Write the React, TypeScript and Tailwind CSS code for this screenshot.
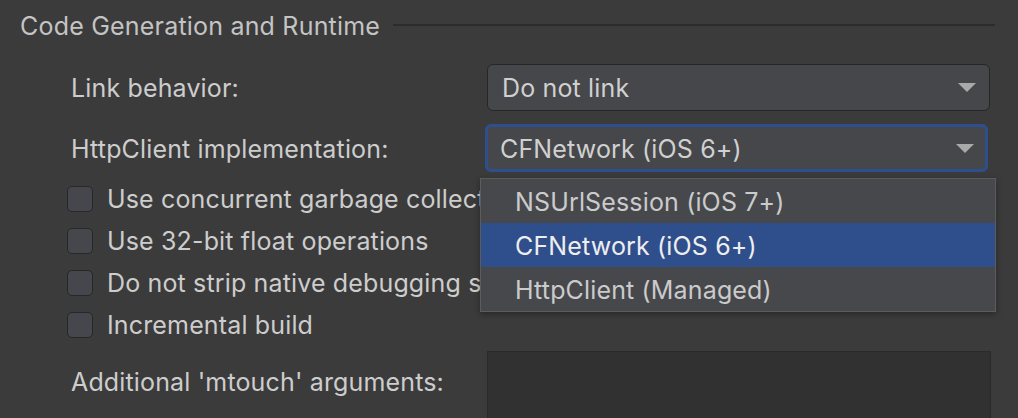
import React from 'react';

const font = { fontFamily: 'Inter, "Noto Sans", sans-serif' };

function Caret() {
  return (
    <svg width="18" height="9" viewBox="0 0 18 9" className="shrink-0">
      <path d="M0 0 L18 0 L9 9 Z" fill="#a9a9a9" />
    </svg>
  );
}

function Combo({ value, focused }: { value: string; focused?: boolean }) {
  return (
    <div
      className={
        focused
          ? 'w-[503px] h-[48px] rounded-[6px] border-[3px] border-[#2e4f8e] bg-[#45474a] flex items-center pl-[12px] pr-[11px]'
          : 'w-[503px] h-[47px] rounded-[6px] border border-[#262626] bg-[#45474a] flex items-center pl-[14px] pr-[13px]'
      }
    >
      <span className="flex-1 pt-[3px] text-[25px] tracking-[0.15px] text-[#d0d0d0]">{value}</span>
      <Caret />
    </div>
  );
}

function Check({ label }: { label: string }) {
  return (
    <div className="flex items-center h-[42px] pl-[67px] w-[481px] overflow-hidden whitespace-nowrap">
      <div className="w-[26px] h-[26px] shrink-0 rounded-[5px] border border-[#272727] bg-[#46474d]" />
      <span className="ml-[14px] pt-[2px] text-[25px] tracking-[0.15px] text-[#cdcdcd]">{label}</span>
    </div>
  );
}

export default function App() {
  const options = ['NSUrlSession (iOS 7+)', 'CFNetwork (iOS 6+)', 'HttpClient (Managed)'];
  return (
    <div className="relative w-[1018px] h-[418px] overflow-hidden bg-[#3b3b3b]" style={font}>
      <div className="flex items-center h-[50px] pl-[20px] pr-[23px]">
        <span className="pt-[4px] text-[25px] tracking-[0.2px] text-[#c4c4c4]">Code Generation and Runtime</span>
        <div className="flex-1 ml-[13px] h-[2px] bg-[#2c2c2c]" />
      </div>

      <div className="flex items-center pl-[71px] mt-[14px]">
        <span className="w-[416px] pt-[3px] text-[25px] tracking-[0.15px] text-[#cdcdcd]">Link behavior:</span>
        <Combo value="Do not link" />
      </div>

      <div className="flex items-center pl-[71px] mt-[13px]">
        <span className="w-[414px] pt-[3px] text-[25px] tracking-[0.15px] text-[#cdcdcd]">HttpClient implementation:</span>
        <Combo value="CFNetwork (iOS 6+)" focused />
      </div>

      <div className="mt-[6px]">
        <Check label="Use concurrent garbage collector (SGen)" />
        <Check label="Use 32-bit float operations" />
        <Check label="Do not strip native debugging symbols" />
        <Check label="Incremental build" />
      </div>

      <div className="flex items-start pl-[71px] mt-[5px]">
        <span className="w-[416px] mt-[13px] text-[25px] tracking-[0.15px] text-[#cdcdcd]">Additional 'mtouch' arguments:</span>
        <div className="w-[504px] h-[80px] border border-[#2a2a2a] bg-[#313131]" />
      </div>

      <div className="absolute left-[480px] top-[178px] w-[516px] border border-[#5c5c5c] bg-[#46484b] shadow-[0_2px_6px_rgba(0,0,0,0.35)]">
        {options.map((o, i) => (
          <div
            key={o}
            className={
              i === 1
                ? 'h-[44px] flex items-center pl-[34px] pt-[4px] bg-[#2f4e8c] text-[25px] tracking-[0.15px] text-[#eeeeee]'
                : 'h-[44px] flex items-center pl-[34px] pt-[4px] text-[25px] tracking-[0.15px] text-[#cbcbcb]'
            }
          >
            {o}
          </div>
        ))}
      </div>
    </div>
  );
}
